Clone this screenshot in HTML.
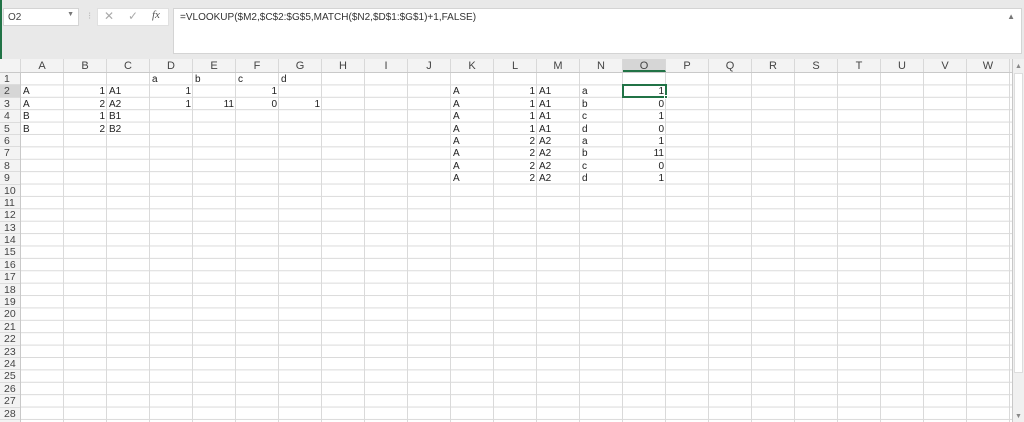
<!DOCTYPE html>
<html><head><meta charset="utf-8"><style>
*{margin:0;padding:0;box-sizing:border-box}
body{width:1024px;height:422px;overflow:hidden;background:#e9e9e9;font-family:"Liberation Sans",sans-serif;font-size:10px;color:#222;position:relative}
.abs{position:absolute}
#nb{left:3px;top:8px;width:76px;height:18px;background:#fff;border:1px solid #d4d4d4;padding:3px 4px;color:#444}
#fb{left:173px;top:8px;width:849px;height:46px;background:#fff;border:1px solid #d4d4d4;padding:3px 6px;color:#333}
#grid{left:21px;top:73px;width:991px;height:349px;background-color:#fff;
background-image:linear-gradient(to right,transparent 42px,#dadada 42px),linear-gradient(to bottom,transparent 11.4px,#dadada 11.4px);
background-size:43px 100%,100% 12.4px}
#colh{left:0;top:59px;width:1012px;height:14px;background:#f3f3f3;border-bottom:1px solid #c9c9c9}
.ch{position:absolute;top:0;width:43px;height:13px;text-align:center;line-height:14px;font-size:11px;color:#444;border-right:1px solid #d8d8d8}
#rowh{left:0;top:73px;width:21px;height:349px;background:#f3f3f3;border-right:1px solid #c9c9c9}
#rowh div{height:12.4px;line-height:12.4px;font-size:10.5px;padding-left:4px;color:#444;border-bottom:1px solid #dcdcdc}
.c{position:absolute;width:43px;height:12.4px;line-height:13px;padding:0 2px;white-space:nowrap}
.r{text-align:right}
#vs{left:1012px;top:59px;width:12px;height:363px;background:#f0f0f0;border-left:1px solid #c8c8c8}
</style></head><body>
<div class="abs" style="left:0;top:0;width:2px;height:422px;background:#217346"></div>
<div class="abs" id="nb">O2<span style="position:absolute;right:4px;top:2px;font-size:7px;color:#777">▼</span></div>
<div class="abs" style="left:88px;top:11px;color:#bbb">⁝</div>
<div class="abs" style="left:97px;top:8px;width:72px;height:18px;background:#fff;border:1px solid #e0e0e0"></div>
<div class="abs" style="left:104px;top:9px;color:#aaa;font-size:12px">✕</div>
<div class="abs" style="left:128px;top:9px;color:#aaa;font-size:12px">✓</div>
<div class="abs" style="left:152px;top:9px;color:#555;font-size:11px;font-style:italic;font-family:'Liberation Serif',serif">fx</div>
<div class="abs" id="fb">=VLOOKUP($M2,$C$2:$G$5,MATCH($N2,$D$1:$G$1)+1,FALSE)<span style="position:absolute;right:6px;top:3px;font-size:8px;color:#777">▲</span></div>
<div class="abs" id="grid"></div>
<div class="abs" id="colh">
<div class="ch" style="left:0;width:21px"></div>
<div class="ch" style="left:21px">A</div><div class="ch" style="left:64px">B</div><div class="ch" style="left:107px">C</div><div class="ch" style="left:150px">D</div><div class="ch" style="left:193px">E</div><div class="ch" style="left:236px">F</div><div class="ch" style="left:279px">G</div><div class="ch" style="left:322px">H</div><div class="ch" style="left:365px">I</div><div class="ch" style="left:408px">J</div><div class="ch" style="left:451px">K</div><div class="ch" style="left:494px">L</div><div class="ch" style="left:537px">M</div><div class="ch" style="left:580px">N</div><div class="ch" style="left:623px;background:#d6d6d6;border-bottom:2px solid #217346">O</div><div class="ch" style="left:666px">P</div><div class="ch" style="left:709px">Q</div><div class="ch" style="left:752px">R</div><div class="ch" style="left:795px">S</div><div class="ch" style="left:838px">T</div><div class="ch" style="left:881px">U</div><div class="ch" style="left:924px">V</div><div class="ch" style="left:967px">W</div>
</div>
<div class="abs" id="rowh"><div>1</div><div style="background:#d6d6d6">2</div><div>3</div><div>4</div><div>5</div><div>6</div><div>7</div><div>8</div><div>9</div><div>10</div><div>11</div><div>12</div><div>13</div><div>14</div><div>15</div><div>16</div><div>17</div><div>18</div><div>19</div><div>20</div><div>21</div><div>22</div><div>23</div><div>24</div><div>25</div><div>26</div><div>27</div><div>28</div></div>

<div class="c" style="left:150px;top:73px">a</div><div class="c" style="left:193px;top:73px">b</div><div class="c" style="left:236px;top:73px">c</div><div class="c" style="left:279px;top:73px">d</div>

<div class="c" style="left:21px;top:85.4px">A</div><div class="c r" style="left:64px;top:85.4px">1</div><div class="c" style="left:107px;top:85.4px">A1</div><div class="c r" style="left:150px;top:85.4px">1</div><div class="c r" style="left:236px;top:85.4px">1</div>
<div class="c" style="left:21px;top:97.8px">A</div><div class="c r" style="left:64px;top:97.8px">2</div><div class="c" style="left:107px;top:97.8px">A2</div><div class="c r" style="left:150px;top:97.8px">1</div><div class="c r" style="left:193px;top:97.8px">11</div><div class="c r" style="left:236px;top:97.8px">0</div><div class="c r" style="left:279px;top:97.8px">1</div>
<div class="c" style="left:21px;top:110.2px">B</div><div class="c r" style="left:64px;top:110.2px">1</div><div class="c" style="left:107px;top:110.2px">B1</div>
<div class="c" style="left:21px;top:122.6px">B</div><div class="c r" style="left:64px;top:122.6px">2</div><div class="c" style="left:107px;top:122.6px">B2</div>

<div class="c" style="left:451px;top:85.4px">A</div><div class="c r" style="left:494px;top:85.4px">1</div><div class="c" style="left:537px;top:85.4px">A1</div><div class="c" style="left:580px;top:85.4px">a</div><div class="c r" style="left:623px;top:85.4px">1</div>
<div class="c" style="left:451px;top:97.8px">A</div><div class="c r" style="left:494px;top:97.8px">1</div><div class="c" style="left:537px;top:97.8px">A1</div><div class="c" style="left:580px;top:97.8px">b</div><div class="c r" style="left:623px;top:97.8px">0</div>
<div class="c" style="left:451px;top:110.2px">A</div><div class="c r" style="left:494px;top:110.2px">1</div><div class="c" style="left:537px;top:110.2px">A1</div><div class="c" style="left:580px;top:110.2px">c</div><div class="c r" style="left:623px;top:110.2px">1</div>
<div class="c" style="left:451px;top:122.6px">A</div><div class="c r" style="left:494px;top:122.6px">1</div><div class="c" style="left:537px;top:122.6px">A1</div><div class="c" style="left:580px;top:122.6px">d</div><div class="c r" style="left:623px;top:122.6px">0</div>
<div class="c" style="left:451px;top:135px">A</div><div class="c r" style="left:494px;top:135px">2</div><div class="c" style="left:537px;top:135px">A2</div><div class="c" style="left:580px;top:135px">a</div><div class="c r" style="left:623px;top:135px">1</div>
<div class="c" style="left:451px;top:147.4px">A</div><div class="c r" style="left:494px;top:147.4px">2</div><div class="c" style="left:537px;top:147.4px">A2</div><div class="c" style="left:580px;top:147.4px">b</div><div class="c r" style="left:623px;top:147.4px">11</div>
<div class="c" style="left:451px;top:159.8px">A</div><div class="c r" style="left:494px;top:159.8px">2</div><div class="c" style="left:537px;top:159.8px">A2</div><div class="c" style="left:580px;top:159.8px">c</div><div class="c r" style="left:623px;top:159.8px">0</div>
<div class="c" style="left:451px;top:172.2px">A</div><div class="c r" style="left:494px;top:172.2px">2</div><div class="c" style="left:537px;top:172.2px">A2</div><div class="c" style="left:580px;top:172.2px">d</div><div class="c r" style="left:623px;top:172.2px">1</div>

<div class="abs" style="left:622px;top:84px;width:45px;height:14px;border:2px solid #217346"></div>
<div class="abs" style="left:664px;top:95px;width:4px;height:4px;background:#217346;border:1px solid #fff"></div>
<div class="abs" id="vs"><div style="text-align:center;font-size:7px;color:#888;margin-top:4px">▲</div><div style="position:absolute;left:1px;top:6px;width:9px;height:300px;background:#fff;border:1px solid #ddd;top:14px"></div><div style="position:absolute;bottom:2px;width:100%;text-align:center;font-size:7px;color:#888">▼</div></div>
</body></html>
